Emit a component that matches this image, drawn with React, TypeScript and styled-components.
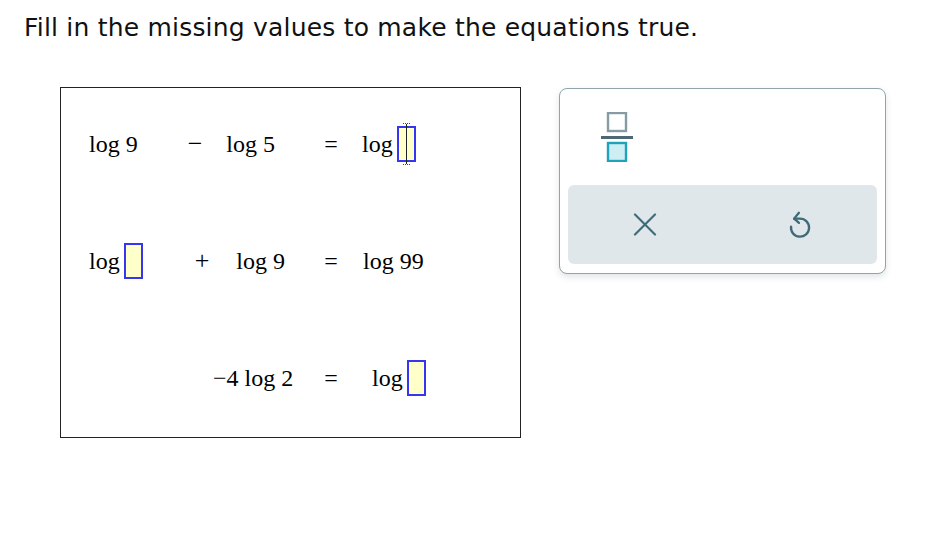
import React from 'react';
import styled, { createGlobalStyle } from 'styled-components';

const GlobalStyle = createGlobalStyle`
  html, body {
    margin: 0;
    padding: 0;
    background: #ffffff;
  }
  body {
    font-family: "DejaVu Sans", Verdana, sans-serif;
    color: #000;
  }
`;

const Page = styled.div`
  width: 944px;
  height: 534px;
  overflow: hidden;
`;

const Title = styled.h1`
  margin: 0;
  padding: 13px 0 0 24px;
  font-family: "DejaVu Sans", Verdana, sans-serif;
  font-weight: normal;
  font-size: 25px;
  letter-spacing: 0.2px;
  line-height: 30px;
  color: #111;
`;

const Main = styled.div`
  display: flex;
  align-items: flex-start;
  gap: 38px;
  padding: 44px 0 0 60px;
`;

const EquationBox = styled.div`
  box-sizing: border-box;
  width: 461px;
  height: 351px;
  border: 1px solid #222;
  padding: 36px 0 0 28px;
  display: grid;
  grid-template-columns: 228px 28px 1fr;
  grid-auto-rows: 40px;
  row-gap: 77px;
  align-content: start;
  font-family: "Liberation Serif", "Times New Roman", serif;
  font-size: 24px;
  line-height: 24px;
`;

const Side = styled.div<{ indent?: number }>`
  display: flex;
  align-items: center;
  padding-left: ${(p) => p.indent ?? 0}px;
  white-space: nowrap;
`;

const Equals = styled.div`
  display: flex;
  align-items: center;
  justify-content: center;
`;

const Op = styled.span<{ before: number; after: number }>`
  font-size: 26px;
  margin: 0 ${(p) => p.after}px 0 ${(p) => p.before}px;
`;

const Term = styled.span`
  display: inline-flex;
  align-items: center;
`;

const Blank = styled.span<{ active?: boolean }>`
  position: relative;
  display: inline-block;
  width: 19px;
  height: 36px;
  margin-left: 4px;
  box-sizing: border-box;
  border: 2px solid #3535f2;
  background: #ffffc9;

  &::after {
    content: '';
    display: ${(p) => (p.active ? 'block' : 'none')};
    position: absolute;
    left: 7px;
    top: -4px;
    width: 1px;
    height: 40px;
    background: #222;
  }
  &::before {
    content: '';
    display: ${(p) => (p.active ? 'block' : 'none')};
    position: absolute;
    left: 4px;
    top: -5px;
    width: 7px;
    height: 40px;
    border-top: 1px dotted #444;
    border-bottom: 1px dotted #444;
  }
`;

const Panel = styled.div`
  margin-top: 1px;
  width: 327px;
  height: 186px;
  box-sizing: border-box;
  border: 1px solid #8fa4ab;
  border-radius: 8px;
  background: #fff;
  box-shadow: 0 3px 6px rgba(60, 80, 90, 0.15);
  padding: 0 8px 9px 8px;
  display: flex;
  flex-direction: column;
`;

const KeyRow = styled.div`
  height: 96px;
  display: flex;
  align-items: center;
  padding-left: 33px;
`;

const Actions = styled.div`
  flex: 1;
  border-radius: 6px;
  background: #e0e7ea;
  display: grid;
  grid-template-columns: 1fr 1fr;
  align-items: center;
  justify-items: center;
`;

const IconButton = styled.button`
  border: none;
  background: transparent;
  padding: 0;
  display: flex;
  align-items: center;
  justify-content: center;
  cursor: pointer;
`;

const FractionIcon = () => (
  <svg width="32" height="50" viewBox="0 0 32 50">
    <rect x="7" y="1" width="18" height="18" fill="#fff" stroke="#869ba3" strokeWidth="2.4" />
    <rect x="0" y="24" width="32" height="3" fill="#4d6873" />
    <rect x="7" y="31" width="18" height="18" fill="#cdeff4" stroke="#1ea3bb" strokeWidth="2.4" />
  </svg>
);

const CloseIcon = () => (
  <svg width="24" height="24" viewBox="0 0 24 24" fill="none" stroke="#3f6a77" strokeWidth="2.2" strokeLinecap="round">
    <path d="M2 1.5 L22 21.5" />
    <path d="M22 1.5 L2 21.5" />
  </svg>
);

const UndoIcon = () => (
  <svg width="26" height="34" viewBox="0 0 24 32" fill="none" stroke="#3f6a77" strokeWidth="2.2" strokeLinecap="round" strokeLinejoin="round">
    <path d="M6.5 10 H12 A8.5 8.5 0 1 1 3.6 17.5" />
    <path d="M11 4.5 L6.5 10 L11 14" />
  </svg>
);

const App = () => (
  <Page>
    <GlobalStyle />
    <Title>Fill in the missing values to make the equations true.</Title>
    <Main>
      <EquationBox>
        <Side>
          <Term>log 9</Term>
          <Op before={50} after={24}>−</Op>
          <Term>log 5</Term>
        </Side>
        <Equals>=</Equals>
        <Side indent={17}>
          <Term>
            log<Blank active />
          </Term>
        </Side>

        <Side>
          <Term>
            log<Blank />
          </Term>
          <Op before={52} after={27}>+</Op>
          <Term>log 9</Term>
        </Side>
        <Equals>=</Equals>
        <Side indent={18}>
          <Term>log 99</Term>
        </Side>

        <Side indent={124}>
          <Term>−4 log 2</Term>
        </Side>
        <Equals>=</Equals>
        <Side indent={27}>
          <Term>
            log<Blank />
          </Term>
        </Side>
      </EquationBox>
      <Panel>
        <KeyRow>
          <FractionIcon />
        </KeyRow>
        <Actions>
          <IconButton aria-label="clear">
            <CloseIcon />
          </IconButton>
          <IconButton aria-label="undo">
            <UndoIcon />
          </IconButton>
        </Actions>
      </Panel>
    </Main>
  </Page>
);

export default App;
